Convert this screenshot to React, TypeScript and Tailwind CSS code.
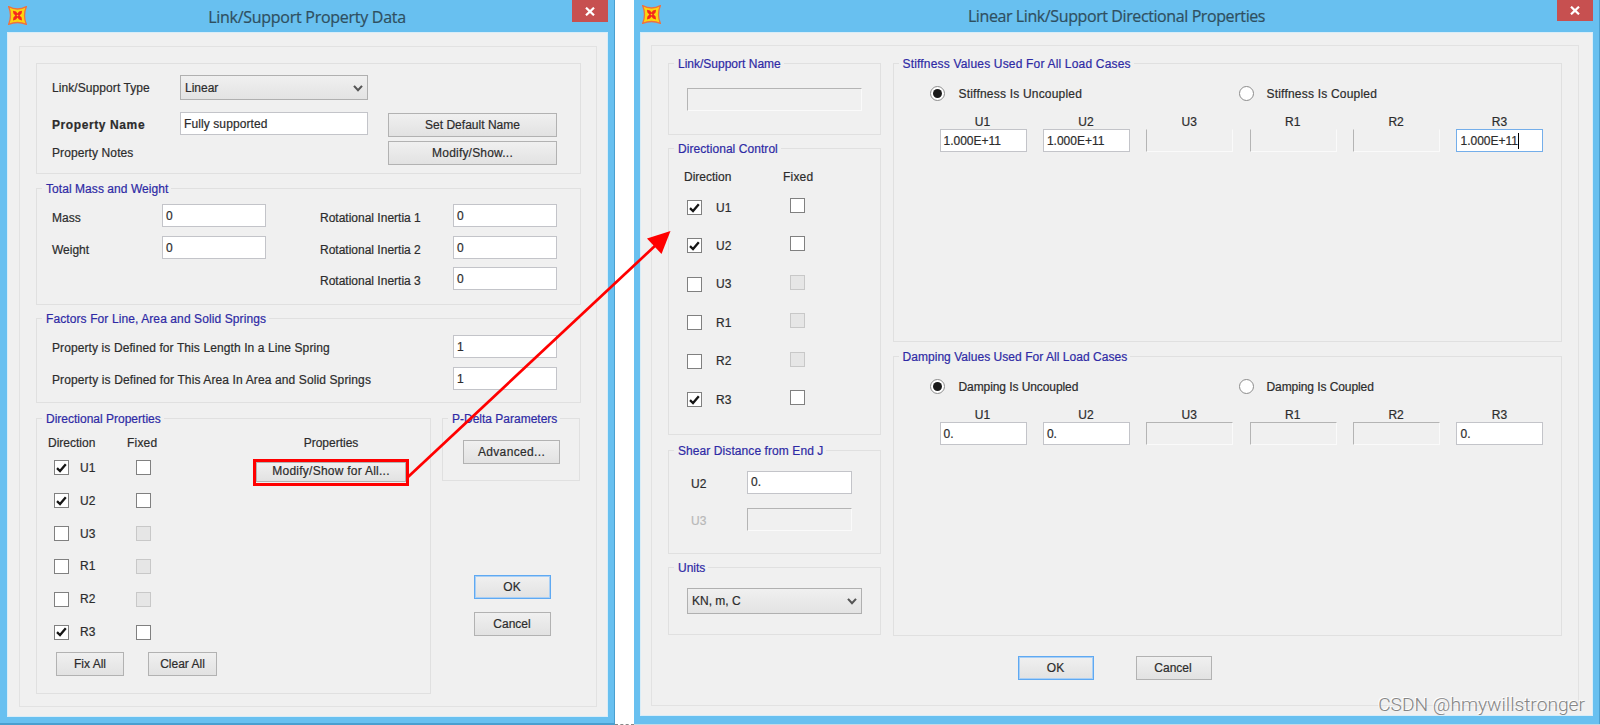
import type { ReactNode } from "react";
import clsx from "clsx";

const DIRECTIONS = [
  { name: "U1", active: true },
  { name: "U2", active: true },
  { name: "U3", active: false },
  { name: "R1", active: false },
  { name: "R2", active: false },
  { name: "R3", active: true },
];

function AppIcon() {
  return (
    <svg width="19" height="19" viewBox="0 0 19 19">
      <path d="M0.6 0.6 Q9.5 5.4 18.4 0.6 Q14.6 9.5 18.4 18.4 Q9.5 14.6 0.6 18.4 Q4.4 9.5 0.6 0.6Z" fill="#fdd50f" stroke="#ef7040" strokeWidth="1.3" />
      <path d="M5 4.8 L8 5.4 L9.5 7.6 L11 5.4 L14 4.8 L13.6 7.6 L11.6 9.5 L13.6 11.6 L14 14.4 L11 13.6 L9.5 11.4 L8 13.6 L5 14.4 L5.4 11.6 L7.4 9.5 L5.4 7.6Z" fill="#f5281c" />
      <circle cx="9.5" cy="9.5" r="0.8" fill="#fdd50f" />
    </svg>
  );
}

function Dialog({ title, className, titleClass, closeClass, iconClass, children }: { title: string; className: string; titleClass: string; closeClass: string; iconClass: string; children: ReactNode }) {
  return (
    <div className={clsx("flex flex-col shrink-0 bg-[#68c0f0] h-[724px]", className)}>
      <div className="relative flex h-8 shrink-0 justify-center">
        <div className={clsx("absolute", iconClass)}>
          <AppIcon />
        </div>
        <h1 className={clsx("font-['Open_Sans',sans-serif] text-[16px] leading-8 text-[#2f4f60] whitespace-nowrap", titleClass)}>{title}</h1>
        <button className={clsx("absolute top-0 flex w-9 items-center justify-center bg-[#c75050]", closeClass)}>
          <svg width="10" height="9" viewBox="0 0 10 9">
            <path d="M1 0.7 L9 8.3 M9 0.7 L1 8.3" stroke="#fff" strokeWidth="2.2" />
          </svg>
        </button>
      </div>
      {children}
    </div>
  );
}

function Group({ legend, legendClass, className, children }: { legend?: string; legendClass?: string; className: string; children?: ReactNode }) {
  return (
    <section className={clsx("flex shrink-0 flex-col border border-[#e0e0e0]", className)}>
      {legend && (
        <h2 className={clsx("-mt-2 ml-[5px] h-4 w-fit shrink-0 bg-[#f0f0f0] pl-[4px] pr-[3px] text-[#2e2aa5] whitespace-nowrap", legendClass)}>{legend}</h2>
      )}
      <div className="flex items-start">{children}</div>
    </section>
  );
}

function Button({ className, primary, children }: { className?: string; primary?: boolean; children: ReactNode }) {
  return (
    <button
      className={clsx(
        "flex h-6 shrink-0 items-center justify-center border bg-linear-to-b from-[#f0f0f0] to-[#e2e2e2] whitespace-nowrap",
        primary ? "border-[#5fa9f2] shadow-[inset_0_0_0_1px_#a9cff5]" : "border-[#b2b2b2]",
        className
      )}
    >
      {children}
    </button>
  );
}

function Field({ className, value, focused }: { className?: string; value: string; focused?: boolean }) {
  return (
    <div
      className={clsx(
        "flex shrink-0 items-center border bg-white pl-[3px]",
        focused ? "border-[#74aeea]" : "border-[#c3c4c9]",
        className
      )}
    >
      {value}
      {focused && <span className="h-4 w-px bg-black" />}
    </div>
  );
}

function DisabledField({ className, noTop }: { className: string; noTop?: boolean }) {
  return (
    <div
      className={clsx(
        "shrink-0 border border-l-[#b4b4b4] border-r-[#fafafa] border-b-[#fafafa]",
        noTop ? "border-t-transparent" : "border-t-[#b4b4b4]",
        className
      )}
    />
  );
}

function Select({ className, value }: { className: string; value: string }) {
  return (
    <div className={clsx("flex shrink-0 items-center justify-between border border-[#b0b0b0] bg-linear-to-b from-[#f0f0f0] to-[#e3e3e3] pl-1 pr-1", className)}>
      <span className="pt-[1px]">{value}</span>
      <svg width="10" height="8" viewBox="0 0 10 8">
        <path d="M1 1.9 L5 6.2 L9 1.9" fill="none" stroke="#555" strokeWidth="2.1" />
      </svg>
    </div>
  );
}

function Check({ className, checked, disabled }: { className?: string; checked?: boolean; disabled?: boolean }) {
  return (
    <span
      className={clsx(
        "flex size-[15px] shrink-0 items-center justify-center border",
        disabled ? "border-[#c8c8c8] bg-[#e6e6e6]" : "border-[#808080] bg-white",
        className
      )}
    >
      {checked && (
        <svg width="11" height="10" viewBox="0 0 11 10">
          <path d="M1 5.2 L4 8 L9.8 1.2" fill="none" stroke="#151515" strokeWidth="2.3" />
        </svg>
      )}
    </span>
  );
}

function Radio({ checked }: { checked?: boolean }) {
  return (
    <span className="flex size-[15px] shrink-0 items-center justify-center rounded-full border border-[#8c8c8c] bg-white">
      {checked && <span className="size-[9px] rounded-full bg-[#1a1a1a]" />}
    </span>
  );
}

function ValuesGroup({ legend, legendClass, kind, value, className, textClass, stiffness }: { legend: string; legendClass?: string; kind: string; value: string; className: string; textClass?: string; stiffness?: boolean }) {
  return (
    <Group legend={legend} legendClass={legendClass} className={className}>
      <div className="flex flex-col">
        <div className="mt-[13px] ml-[36px] flex h-4 items-center">
          <Radio checked />
          <span className={clsx("ml-[14px] w-[280px] pt-[1px]", textClass)}>{kind} Is Uncoupled</span>
          <Radio />
          <span className={clsx("ml-[13px] pt-[1px]", textClass)}>{kind} Is Coupled</span>
        </div>
        <div className="mt-[13px] ml-[46px] flex gap-[16.4px]">
          {DIRECTIONS.map((d) => (
            <div key={d.name} className="flex w-[87px] flex-col">
              <span className="-ml-[1px] h-[15px] text-center leading-[16px]">{d.name}</span>
              {d.active ? (
                <Field className="h-[23px]" value={value} focused={stiffness && d.name === "R3"} />
              ) : (
                <DisabledField className="h-[23px]" noTop={stiffness} />
              )}
            </div>
          ))}
        </div>
      </div>
    </Group>
  );
}

function PropertyDataDialog() {
  return (
    <Dialog
      title="Link/Support Property Data"
      className="w-[615px] border-r border-b border-[#4a9fcf]"
      titleClass="pt-[1px] tracking-[-0.27px]"
      closeClass="right-[6px] h-[22px]"
      iconClass="left-[8px] top-[6px]"
    >
      <div className="ml-[7px] h-[685px] w-[601px] border border-[#d9edf8] bg-[#f0f0f0]">
        <div className="ml-[11px] mt-[13px] flex h-[661px] w-[578px] flex-col border border-[#e2e2e2] pl-4 pt-4">
          <Group className="h-[111px] w-[545px]">
            <div className="mt-4 ml-[15px] flex w-[128px] flex-col">
              <span className="h-4 tracking-[0.08px]">Link/Support Type</span>
              <span className="mt-[21px] h-4 font-bold tracking-[0.6px]">Property Name</span>
              <span className="mt-[12px] h-4 tracking-[0.1px]">Property Notes</span>
            </div>
            <div className="mt-[11px] flex w-[188px] flex-col gap-[12px]">
              <Select className="h-[25px]" value="Linear" />
              <Field className="h-[23px] tracking-[0.1px]" value="Fully supported" />
            </div>
            <div className="mt-[49px] ml-5 flex w-[169px] flex-col gap-1">
              <Button className="tracking-[0.02px]">Set Default Name</Button>
              <Button className="tracking-[0.2px]">Modify/Show...</Button>
            </div>
          </Group>

          <Group legend="Total Mass and Weight" legendClass="tracking-[0.06px]" className="mt-[14px] h-[117px] w-[545px]">
            <div className="mt-[6px] ml-[15px] flex w-[110px] flex-col leading-[31.5px]">
              <span>Mass</span>
              <span>Weight</span>
            </div>
            <div className="mt-[7px] flex w-[104px] flex-col gap-[9px]">
              <Field className="h-[23px]" value="0" />
              <Field className="h-[23px]" value="0" />
            </div>
            <div className="mt-[6px] ml-[54px] flex w-[133px] flex-col leading-[31.7px]">
              <span>Rotational Inertia 1</span>
              <span>Rotational Inertia 2</span>
              <span>Rotational Inertia 3</span>
            </div>
            <div className="mt-[7px] flex w-[104px] flex-col">
              <Field className="h-[23px]" value="0" />
              <Field className="mt-[9px] h-[23px]" value="0" />
              <Field className="mt-[8px] h-[23px]" value="0" />
            </div>
          </Group>

          <Group legend="Factors For Line, Area and Solid Springs" legendClass="tracking-[0.1px]" className="mt-[13px] h-[85px] w-[545px]">
            <div className="mt-[5px] ml-[15px] flex w-[401px] flex-col leading-[32px]">
              <span className="tracking-[0.1px]">Property is Defined for This Length In a Line Spring</span>
              <span className="tracking-[0.12px]">Property is Defined for This Area In Area and Solid Springs</span>
            </div>
            <div className="mt-[8px] flex w-[104px] flex-col gap-[9px]">
              <Field className="h-[23px]" value="1" />
              <Field className="h-[23px]" value="1" />
            </div>
          </Group>

          <div className="mt-[15px] flex gap-[11px]">
            <Group legend="Directional Properties" className="h-[276px] w-[395px]">
              <div className="mt-2 w-[216px]">
                <div className="mb-[0.4px] flex h-4 pl-[11px]">
                  <span className="w-[79px]">Direction</span>
                  <span className="tracking-[0.2px]">Fixed</span>
                </div>
                {DIRECTIONS.map((d) => (
                  <div key={d.name} className="flex h-[32.85px] items-center pl-[17px]">
                    <Check checked={d.active} />
                    <span className="ml-[11px] w-[56px]">{d.name}</span>
                    <Check disabled={!d.active} />
                  </div>
                ))}
                <div className="mt-[3.6px] flex gap-[24px] pl-[19px]">
                  <Button className="w-[68px]">Fix All</Button>
                  <Button className="w-[69px]">Clear All</Button>
                </div>
              </div>
              <div className="mt-2 flex w-[156px] flex-col">
                <span className="h-4 text-center">Properties</span>
                <div className="mt-[8px] h-[27px] border-[3px] border-[#ff0000]">
                  <Button className="h-[20px] w-full pb-[2px] tracking-[0.25px]">Modify/Show for All...</Button>
                </div>
              </div>
            </Group>
            <div className="flex flex-col">
              <Group legend="P-Delta Parameters" className="h-[63px] w-[138px]">
                <Button className="mt-[13px] ml-[20px] w-[97px] tracking-[0.35px]">Advanced...</Button>
              </Group>
              <Button primary className="mt-[94px] ml-[32px] w-[77px] pr-[1px]">OK</Button>
              <Button className="mt-[13px] ml-[32px] w-[77px] pr-[1px]">Cancel</Button>
            </div>
          </div>
        </div>
      </div>
    </Dialog>
  );
}

function DirectionalDialog() {
  return (
    <Dialog
      title="Linear Link/Support Directional Properties"
      className="ml-[19px] w-[966px] border-r border-[#4a9fcf]"
      titleClass="tracking-[-0.4px]"
      closeClass="right-[6px] h-[21px]"
      iconClass="left-[8px] top-[5px]"
    >
      <div className="ml-[6px] h-[684px] w-[953px] border border-[#d9edf8] bg-[#f0f0f0]">
        <div className="ml-[10px] mt-[12px] flex h-[661px] w-[928px] flex-col border border-[#e2e2e2] pl-4 pt-[17px]">
          <div className="flex gap-[11px]">
            <div className="flex w-[213px] flex-col">
              <Group legend="Link/Support Name" className="h-[72px]">
                <DisabledField className="mt-[16px] ml-[18px] h-[23px] w-[175px]" />
              </Group>
              <Group legend="Directional Control" legendClass="tracking-[0.06px]" className="mt-[13px] h-[287px]">
                <div className="mt-[12px] flex flex-col">
                  <div className="mb-[3.4px] flex h-4 pl-[15px]">
                    <span className="w-[99px]">Direction</span>
                    <span className="tracking-[0.2px]">Fixed</span>
                  </div>
                  {DIRECTIONS.map((d) => (
                    <div key={d.name} className="flex h-[38.4px] items-center pl-[18px]">
                      <Check checked={d.active} />
                      <span className="ml-[14px] w-[74px]">{d.name}</span>
                      <Check className="mb-[4px]" disabled={!d.active} />
                    </div>
                  ))}
                </div>
              </Group>
              <Group legend="Shear Distance from End J" legendClass="tracking-[0.08px]" className="mt-[14.6px] h-[104px]">
                <div className="mt-[17px] ml-[22px] flex w-[56px] flex-col gap-[21px]">
                  <span className="h-4">U2</span>
                  <span className="h-4 text-[#b8b8b8]">U3</span>
                </div>
                <div className="mt-[12px] flex w-[105px] flex-col gap-[14px]">
                  <Field className="h-[23px]" value="0." />
                  <DisabledField className="h-[23px]" />
                </div>
              </Group>
              <Group legend="Units" className="mt-[13.4px] h-[68px]">
                <Select className="mt-[12px] ml-[18px] h-[26px] w-[175px]" value="KN, m, C" />
              </Group>
            </div>
            <div className="ml-[0.5px] flex w-[669.5px] flex-col gap-[14px]">
              <ValuesGroup legend="Stiffness Values Used For All Load Cases" legendClass="tracking-[0.18px]" kind="Stiffness" value="1.000E+11" className="h-[279px]" textClass="tracking-[0.2px]" stiffness />
              <ValuesGroup legend="Damping Values Used For All Load Cases" legendClass="tracking-[0.04px]" kind="Damping" value="0." className="h-[280px]" textClass="tracking-[-0.08px]" />
            </div>
          </div>
          <div className="mt-[20px] ml-[350px] flex gap-[42px]">
            <Button primary className="w-[76px] pr-[1px]">OK</Button>
            <Button className="w-[76px] pr-[2px]">Cancel</Button>
          </div>
        </div>
      </div>
    </Dialog>
  );
}

export default function App() {
  return (
    <div className="relative h-[725px] w-[1600px] overflow-hidden bg-white font-['Liberation_Sans',Arial,sans-serif] text-[12px] leading-4 text-[#2c2c2c] [-webkit-text-stroke:0.2px]">
      <div className="flex">
        <PropertyDataDialog />
        <DirectionalDialog />
      </div>
      <div className="flex h-px">
        <span className="w-[615px] bg-[#4a9fcf]" />
        <span className="w-[19px] border-t border-dashed border-[#888]" />
        <span className="w-[966px] bg-[#c5d9e4]" />
      </div>

      {/* callout from the button to the second dialog */}
      <svg className="pointer-events-none absolute inset-0" width="1600" height="725">
        <path d="M408 477 L657 244" stroke="#ff0000" strokeWidth="2.7" />
        <path d="M670.5 231 L647 238.5 L661.5 254Z" fill="#ff0000" />
      </svg>

      <span className="absolute right-[15px] top-[692px] font-[Roboto,sans-serif] text-[19.2px] font-light leading-[26px] whitespace-nowrap text-[#858585] [-webkit-text-stroke:0] [text-shadow:-1px_-1px_0_#fff]">
        CSDN @hmywillstronger
      </span>
    </div>
  );
}
